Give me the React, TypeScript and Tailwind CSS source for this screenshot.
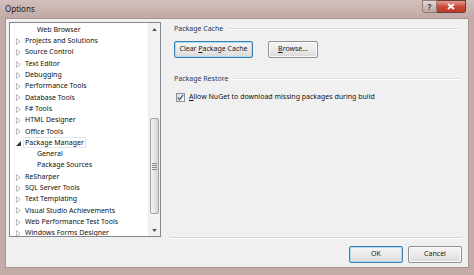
import React from 'react';

const TREE_ITEMS: { label: string; level: number; arrow: 'closed' | 'open' | 'none' }[] = [
  { label: 'Web Browser', level: 1, arrow: 'none' },
  { label: 'Projects and Solutions', level: 0, arrow: 'closed' },
  { label: 'Source Control', level: 0, arrow: 'closed' },
  { label: 'Text Editor', level: 0, arrow: 'closed' },
  { label: 'Debugging', level: 0, arrow: 'closed' },
  { label: 'Performance Tools', level: 0, arrow: 'closed' },
  { label: 'Database Tools', level: 0, arrow: 'closed' },
  { label: 'F# Tools', level: 0, arrow: 'closed' },
  { label: 'HTML Designer', level: 0, arrow: 'closed' },
  { label: 'Office Tools', level: 0, arrow: 'closed' },
  { label: 'Package Manager', level: 0, arrow: 'open' },
  { label: 'General', level: 1, arrow: 'none' },
  { label: 'Package Sources', level: 1, arrow: 'none' },
  { label: 'ReSharper', level: 0, arrow: 'closed' },
  { label: 'SQL Server Tools', level: 0, arrow: 'closed' },
  { label: 'Text Templating', level: 0, arrow: 'closed' },
  { label: 'Visual Studio Achievements', level: 0, arrow: 'closed' },
  { label: 'Web Performance Test Tools', level: 0, arrow: 'closed' },
  { label: 'Windows Forms Designer', level: 0, arrow: 'closed' },
];

const ClosedArrow = () => (
  <svg viewBox="0 0 6 8" className="w-[5px] h-[7px]">
    <path d="M0.5 0.5 L5 4 L0.5 7.5 Z" fill="none" stroke="#a6a6a6" strokeWidth="1" />
  </svg>
);

const OpenArrow = () => (
  <svg viewBox="0 0 6 6" className="w-[5px] h-[5px]">
    <path d="M6 0 L6 6 L0 6 Z" fill="#333" />
  </svg>
);

function TreeRow({ label, level, arrow }: { label: string; level: number; arrow: string }) {
  return (
    <div className="flex items-center h-[11.3px] whitespace-nowrap">
      <div className="w-[13px] flex justify-end pr-[2px] shrink-0">
        {arrow === 'closed' && <ClosedArrow />}
        {arrow === 'open' && <OpenArrow />}
      </div>
      <div className={level === 1 ? 'pl-[12px]' : ''}>
        <span
          className={
            arrow === 'open'
              ? 'px-[1px] border border-[#dde4ec] rounded-[1px] leading-[9px]'
              : 'px-[2px]'
          }
        >
          {label}
        </span>
      </div>
    </div>
  );
}

function Scrollbar() {
  return (
    <div className="w-[12px] h-full bg-[#f2f2f2] border-l border-[#ececec] flex flex-col items-center">
      <div className="h-[12px] w-full flex items-center justify-center">
        <svg viewBox="0 0 6 4" className="w-[5px] h-[3px]">
          <path d="M0 4 L3 0 L6 4 Z" fill="#4d4d4d" />
        </svg>
      </div>
      <div className="h-[83px]" />
      <div className="w-[9px] h-[96px] rounded-[2px] border border-[#a3a3a3] bg-gradient-to-r from-[#f3f3f3] via-[#e6e6e6] to-[#d6d6d6] flex flex-col items-center justify-center gap-[1px]">
        <div className="w-[5px] h-px bg-[#888]" />
        <div className="w-[5px] h-px bg-[#888]" />
        <div className="w-[5px] h-px bg-[#888]" />
        <div className="w-[5px] h-px bg-[#888]" />
      </div>
      <div className="flex-1" />
      <div className="h-[12px] w-full flex items-center justify-center">
        <svg viewBox="0 0 6 4" className="w-[5px] h-[3px]">
          <path d="M0 0 L3 4 L6 0 Z" fill="#4d4d4d" />
        </svg>
      </div>
    </div>
  );
}

function Button({ children, className = '', focused = false }: { children: React.ReactNode; className?: string; focused?: boolean }) {
  return (
    <div
      className={
        'h-[17px] flex items-center justify-center whitespace-nowrap rounded-[2px] border bg-gradient-to-b from-[#f4f4f4] via-[#ebebeb] to-[#d9d9d9] text-[#1a1a1a] ' +
        (focused ? 'border-[#3c7fb1] shadow-[inset_0_0_0_1px_#a9dcf4] ' : 'border-[#8e8f8f] shadow-[inset_0_0_0_1px_#fbfbfb] ') +
        className
      }
    >
      {children}
    </div>
  );
}

function GroupHeader({ title }: { title: string }) {
  return (
    <div className="flex items-center gap-[5px] h-[10px]">
      <span className="text-[#1e3a5a] whitespace-nowrap">{title}</span>
      <div className="flex-1 h-[2px] border-t border-[#d5dfe5] border-b border-b-white" />
    </div>
  );
}

export default function App() {
  return (
    <div
      className="w-[474px] h-[275px] bg-[#c3aca8] flex flex-col text-[7px] text-[#111]"
      style={{ fontFamily: '"Segoe UI", "Noto Sans", "Open Sans", sans-serif' }}
    >
      {/* title bar */}
      <div className="h-[17px] flex items-start justify-between bg-gradient-to-b from-[#d2bfbb] to-[#c2aba7] pl-[5px] pr-[8px]">
        <span className="text-[8px] leading-[16px] text-[#1b1b1b] pt-[1px]">Options</span>
        <div className="flex h-[13px]">
          <div className="w-[15px] h-full flex items-center justify-center border border-[#8d7a78] rounded-bl-[3px] bg-gradient-to-b from-[#e3d8d6] to-[#bba6a2] text-[8px] text-[#3b3b3b] font-bold">
            ?
          </div>
          <div className="w-[29px] h-full flex items-center justify-center border border-l-0 border-[#6a3a34] rounded-br-[3px] bg-gradient-to-b from-[#e49d90] via-[#cc4a3a] to-[#c0392b]">
            <svg viewBox="0 0 8 7" className="w-[8px] h-[7px]">
              <path d="M1 1 L7 6 M7 1 L1 6" stroke="white" strokeWidth="1.8" />
            </svg>
          </div>
        </div>
      </div>

      {/* client area */}
      <div className="flex-1 mx-[5px] mb-[7px] mt-[1px] bg-[#f0f0f0] border border-[#a8938f] flex flex-col">
        <div className="flex flex-1 pt-[3px] pl-[3px]">
          {/* tree */}
          <div className="w-[152px] h-[215px] bg-white border border-[#828790] flex overflow-hidden">
            <div className="flex-1 pt-[1.5px] overflow-hidden">
              {TREE_ITEMS.map((item) => (
                <TreeRow key={item.label} label={item.label} level={item.level} arrow={item.arrow} />
              ))}
            </div>
            <Scrollbar />
          </div>

          {/* right panel */}
          <div className="flex-1 pl-[13px] pr-[9px] pt-[2px] flex flex-col">
            <GroupHeader title="Package Cache" />
            <div className="flex gap-[15px] mt-[7px]">
              <Button focused className="w-[79px]">
                <span>
                  Clear <u>P</u>ackage Cache
                </span>
              </Button>
              <Button className="w-[50px]">
                <span>
                  <u>B</u>rowse...
                </span>
              </Button>
            </div>
            <div className="mt-[16px]">
              <GroupHeader title="Package Restore" />
            </div>
            <div className="flex items-center gap-[4px] mt-[8px] pl-[2px]">
              <div className="w-[9px] h-[9px] border border-[#8f8f8f] bg-gradient-to-br from-[#dcdcdc] to-white flex items-center justify-center">
                <svg viewBox="0 0 8 8" className="w-[7px] h-[7px]">
                  <path d="M1 4 L3 6.5 L7 1" fill="none" stroke="#3f5e8c" strokeWidth="1.4" />
                </svg>
              </div>
              <span className="whitespace-nowrap">
                <u>A</u>llow NuGet to download missing packages during build
              </span>
            </div>
          </div>
        </div>

        {/* bottom */}
        <div className="ml-[164px] mr-[6px] h-[2px] border-t border-[#d5d5d5] border-b border-b-white" />
        <div className="flex justify-end gap-[5px] pr-[6px] pt-[7px] pb-[4px]">
          <Button focused className="w-[54px]">OK</Button>
          <Button className="w-[54px]">Cancel</Button>
        </div>
      </div>
    </div>
  );
}
